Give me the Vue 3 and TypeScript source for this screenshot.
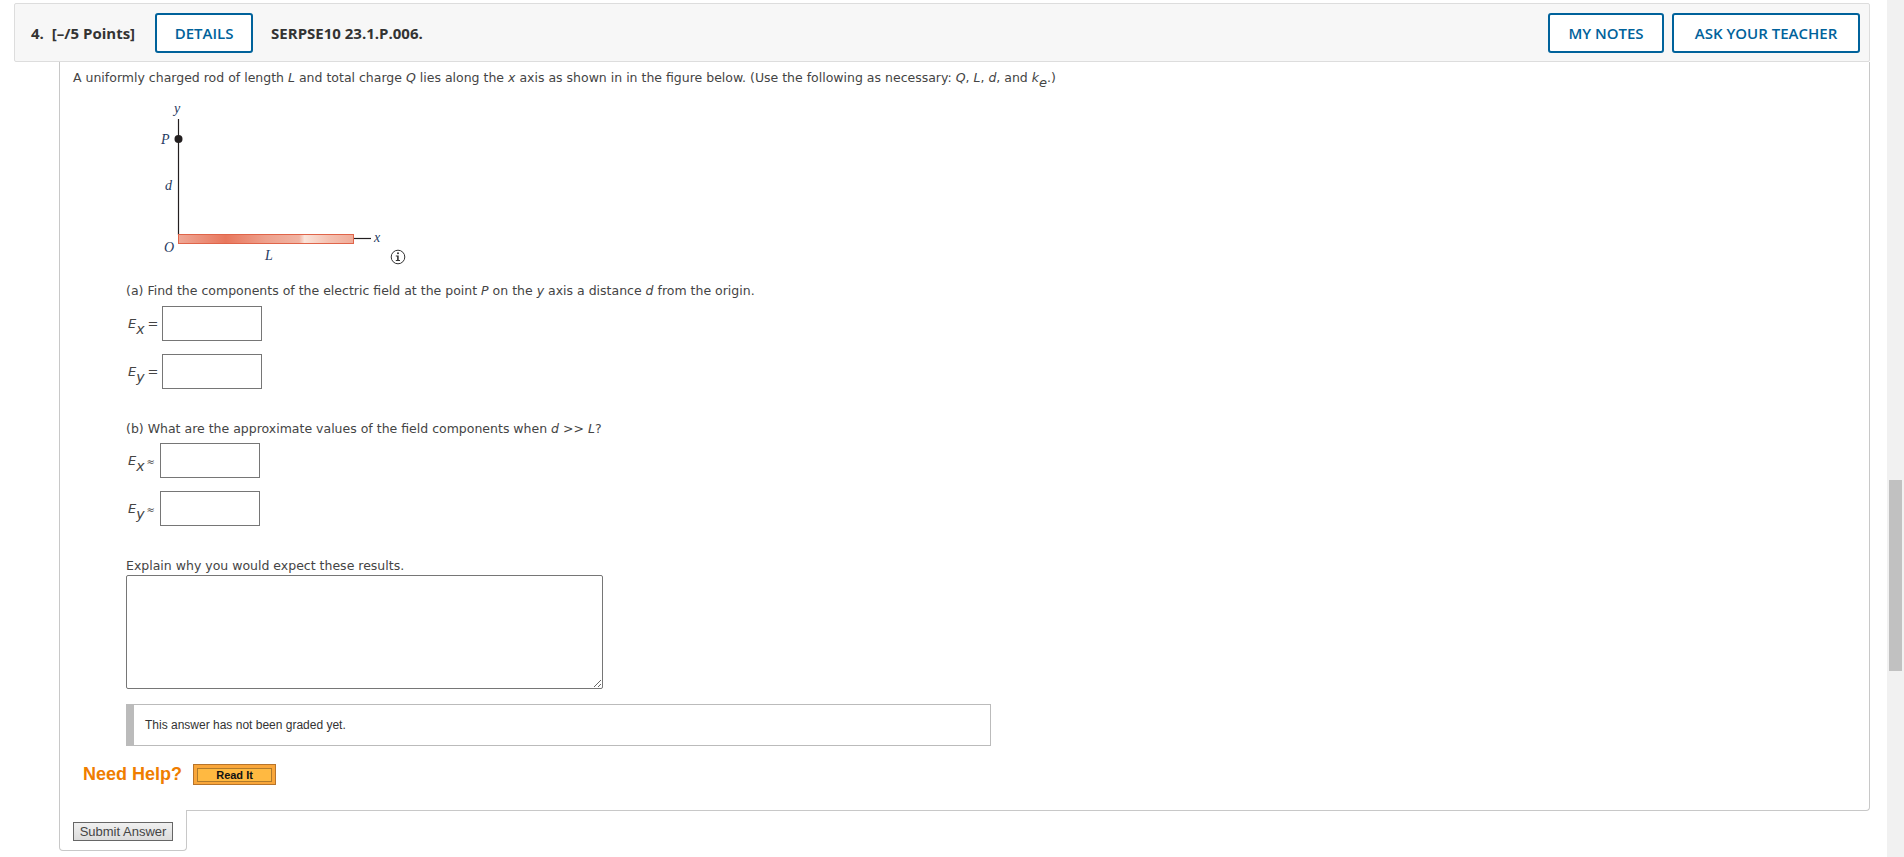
<script setup lang="ts">
const partA = [
  { sub: 'x', rel: '=' },
  { sub: 'y', rel: '=' },
]
const partB = [
  { sub: 'x', rel: '≈' },
  { sub: 'y', rel: '≈' },
]
</script>

<template>
  <div class="page">
    <main class="main">
      <header class="head">
        <span class="num">4.</span>
        <span class="points">[–/5 Points]</span>
        <button class="hbtn details">DETAILS</button>
        <span class="code">SERPSE10 23.1.P.006.</span>
        <button class="hbtn notes">MY NOTES</button>
        <button class="hbtn ask">ASK YOUR TEACHER</button>
      </header>

      <section class="card">
        <p class="intro">A uniformly charged rod of length <i>L</i> and total charge <i>Q</i> lies along the <i>x</i> axis as shown in in the figure below. (Use the following as necessary: <i>Q</i>, <i>L</i>, <i>d</i>, and <i>k</i><sub class="sub">e</sub>.)</p>

        <svg class="figure" width="300" height="190" viewBox="0 0 300 190">
          <defs>
            <linearGradient id="rod" x1="0" x2="1" y1="0" y2="0">
              <stop offset="0" stop-color="#efa896" />
              <stop offset="0.27" stop-color="#e8775d" />
              <stop offset="0.5" stop-color="#eea18d" />
              <stop offset="0.69" stop-color="#f1b4a3" />
              <stop offset="0.72" stop-color="#fae4da" />
              <stop offset="0.86" stop-color="#f4c1b1" />
              <stop offset="1" stop-color="#f0ac99" />
            </linearGradient>
          </defs>
          <line x1="48.5" y1="29" x2="48.5" y2="145" stroke="#231f20" stroke-width="1.2" />
          <circle cx="48.5" cy="49" r="4" fill="#231f20" />
          <rect x="48.5" y="144.5" width="175" height="9" fill="url(#rod)" stroke="#e0654a" stroke-width="1" />
          <line x1="224" y1="148.5" x2="241" y2="148.5" stroke="#231f20" stroke-width="1.2" />
          <text class="fig" x="44" y="23">y</text>
          <text class="fig" x="31" y="54">P</text>
          <text class="fig" x="35" y="100">d</text>
          <text class="fig" x="34" y="162">O</text>
          <text class="fig" x="135" y="170">L</text>
          <text class="fig" x="244" y="152">x</text>
          <circle cx="268" cy="167" r="6.8" fill="#fff" stroke="#333" stroke-width="1" />
          <circle cx="268" cy="163.3" r="1" fill="#333" />
          <path d="M265.8 165.5h2.9v4.6h1.3v1h-4.2v-1h1.3v-3.6h-1.3z" fill="#333" />
        </svg>

        <div class="q qa">(a) Find the components of the electric field at the point <i>P</i> on the <i>y</i> axis a distance <i>d</i> from the origin.</div>
        <div v-for="(r, i) in partA" :key="r.sub" class="row" :class="i === 0 ? 'rowA1' : 'rowGap'">
          <span class="lab labA"><i>E</i><sub class="esub"><i>{{ r.sub }}</i></sub><span class="rel">{{ r.rel }}</span></span>
          <input class="inp" type="text" />
        </div>

        <div class="q qb">(b) What are the approximate values of the field components when <i>d</i> &gt;&gt; <i>L</i>?</div>
        <div v-for="(r, i) in partB" :key="r.sub" class="row" :class="i === 0 ? 'rowB1' : 'rowGap'">
          <span class="lab labB"><i>E</i><sub class="esub"><i>{{ r.sub }}</i></sub><span class="rel small">{{ r.rel }}</span></span>
          <input class="inp" type="text" />
        </div>

        <div class="q explain">Explain why you would expect these results.</div>
        <textarea class="area"></textarea>

        <div class="msg">This answer has not been graded yet.</div>

        <div class="help">
          <span class="need">Need Help?</span>
          <span class="readwrap"><button class="read">Read It</button></span>
        </div>
      </section>

      <div class="tab">
        <button class="submit">Submit Answer</button>
      </div>
    </main>

    <aside class="track"><div class="thumb"></div></aside>
  </div>
</template>

<style>
html, body {
  margin: 0;
  height: 100%;
  overflow: hidden;
  background: #fff;
}
</style>

<style scoped>
.page {
  display: flex;
  height: 857px;
  overflow: hidden;
  font-family: "DejaVu Sans", Verdana, sans-serif;
  font-size: 12.5px;
  color: #444;
}
.main {
  flex: 1;
  min-width: 0;
  padding: 3px 17px 0 14px;
}
.head {
  display: flex;
  align-items: center;
  height: 59px;
  box-sizing: border-box;
  padding: 0 9px 0 16px;
  background: #f7f7f7;
  border: 1px solid #ddd;
  border-radius: 2px;
  font-family: "Open Sans", sans-serif;
  font-weight: 700;
  font-size: 15px;
  color: #333;
}
.num { margin-right: 8px; }
.points { margin-right: 20px; }
.code { margin-left: 18px; }
.hbtn {
  height: 40px;
  box-sizing: border-box;
  background: #fff;
  border: 2px solid #00629b;
  border-radius: 3px;
  color: #00629b;
  font-family: "Open Sans", sans-serif;
  font-weight: 600;
  font-size: 15px;
  padding: 0;
}
.details { width: 98px; }
.notes { width: 116px; margin-left: auto; }
.ask { width: 188px; margin-left: 8px; }
.card {
  margin-left: 45px;
  height: 749px;
  box-sizing: border-box;
  border: 1px solid #c8c8c8;
  border-top: none;
  border-radius: 0 0 4px 0;
}
.intro {
  margin: 0 0 0 13px;
  padding-top: 6px;
  line-height: 20px;
}
.sub {
  font-size: 13px;
  font-style: italic;
  line-height: 0;
  vertical-align: -5px;
}
.figure {
  display: block;
  margin: 2px 0 0 70px;
}
.fig {
  font-family: "Liberation Serif", serif;
  font-style: italic;
  font-size: 14px;
  fill: #1f3a5f;
}
.q {
  margin-left: 66px;
  line-height: 20px;
}
.qa { margin-top: 1px; }
.qb { margin-top: 30px; }
.explain { margin-top: 31px; line-height: 18px; }
.row {
  display: flex;
  align-items: center;
  margin-left: 66px;
}
.rowA1 { margin-top: 5px; }
.rowB1 { margin-top: 4px; }
.rowGap { margin-top: 13px; }
.lab {
  box-sizing: border-box;
  padding-left: 2px;
  white-space: nowrap;
  font-size: 13px;
}
.labA { width: 36px; }
.labB { width: 34px; }
.esub {
  font-size: 14px;
  line-height: 0;
  vertical-align: -6px;
}
.rel { margin-left: 3px; }
.rel.small { font-size: 10px; margin-left: 2px; }
.inp {
  width: 100px;
  height: 35px;
  box-sizing: border-box;
  border: 1px solid #767676;
  background: #fff;
  padding: 0;
  margin: 0;
}
.area {
  display: block;
  width: 477px;
  height: 114px;
  box-sizing: border-box;
  margin: 0 0 0 66px;
  border: 1px solid #767676;
  border-radius: 2px;
  background: #fff;
}
.msg {
  margin: 15px 0 0 66px;
  width: 865px;
  height: 42px;
  box-sizing: border-box;
  border: 1px solid #bbb;
  border-left: 8px solid #bbb;
  padding-left: 11px;
  display: flex;
  align-items: center;
  font-family: "Liberation Sans", Arial, sans-serif;
  font-size: 12px;
  color: #333;
}
.help {
  display: flex;
  align-items: center;
  margin: 18px 0 0 23px;
  height: 21px;
}
.need {
  font-family: "Liberation Sans", Arial, sans-serif;
  font-weight: 700;
  font-size: 18px;
  color: #ef7d00;
  margin-right: 11px;
}
.readwrap {
  display: flex;
  align-items: center;
  justify-content: center;
  width: 83px;
  height: 21px;
  box-sizing: border-box;
  background: #f9a63a;
  border: 1px solid #b8742a;
}
.read {
  width: 75px;
  height: 14px;
  box-sizing: border-box;
  padding: 0;
  background: #ffb941;
  border: 1px solid #b07a2a;
  font-family: "Liberation Sans", Arial, sans-serif;
  font-weight: 700;
  font-size: 11px;
  line-height: 12px;
  color: #111;
}
.tab {
  margin: -1px 0 0 45px;
  width: 128px;
  height: 41px;
  box-sizing: border-box;
  position: relative;
  background: #fff;
  border: 1px solid #c8c8c8;
  border-top: none;
  border-radius: 0 0 4px 4px;
  padding: 12px 0 0 13px;
}
.submit {
  display: block;
  width: 100px;
  height: 19px;
  box-sizing: border-box;
  padding: 0;
  background: linear-gradient(#f0f0f0, #dcdcdc);
  border: 1px solid #666;
  font-family: "Liberation Sans", Arial, sans-serif;
  font-size: 13px;
  line-height: 17px;
  color: #444;
}
.track {
  width: 17px;
  height: 857px;
  background: #f1f1f1;
  padding: 480px 2px 0;
  box-sizing: border-box;
}
.thumb {
  height: 191px;
  background: #c1c1c1;
}
</style>
